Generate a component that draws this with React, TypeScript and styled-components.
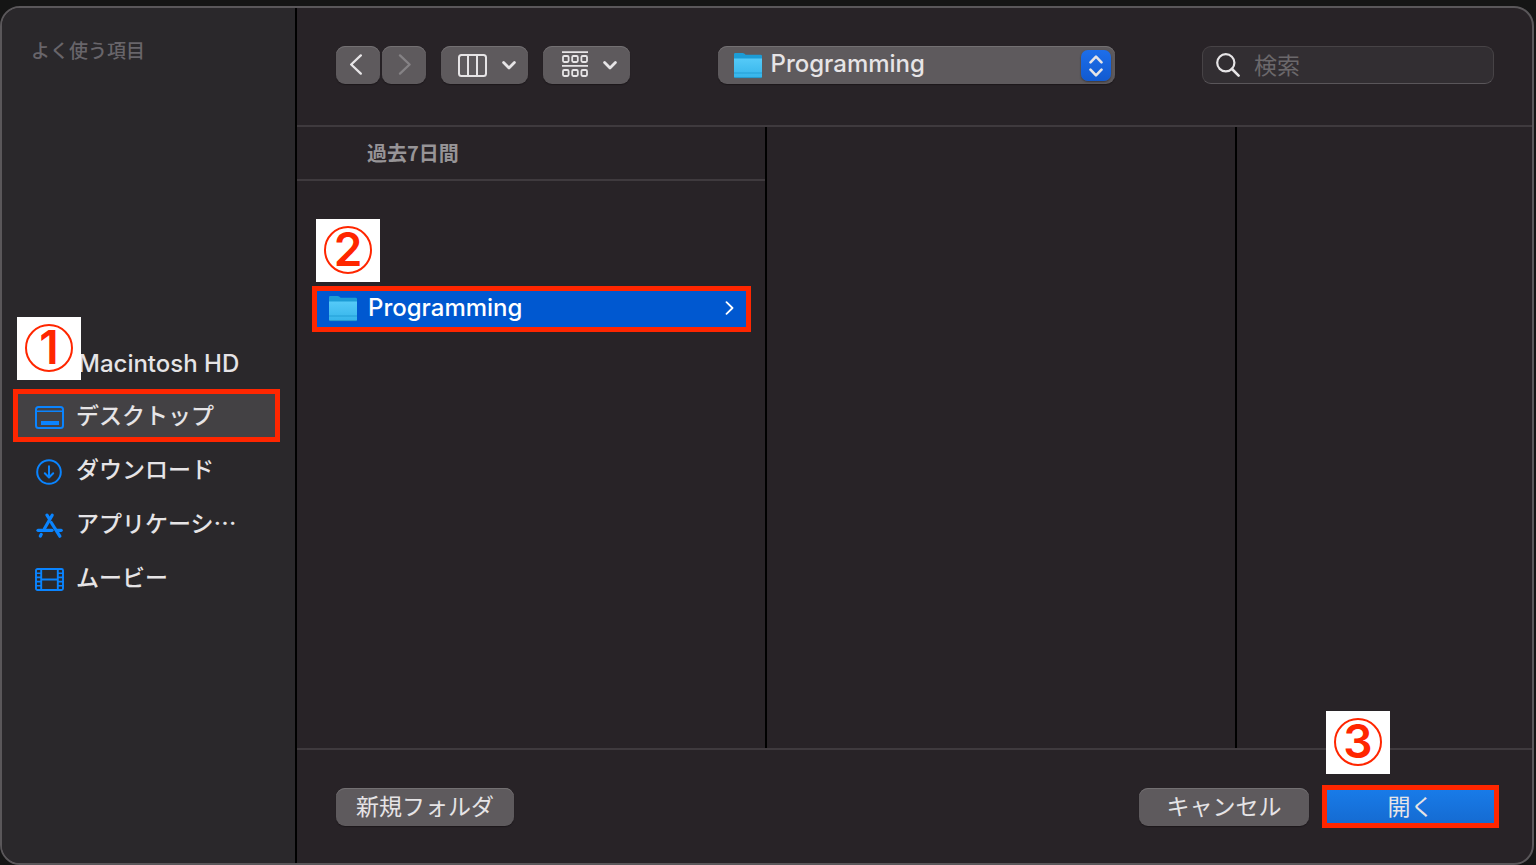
import React from 'react';
import styled, { createGlobalStyle, css } from 'styled-components';

const color = {
  desktop: '#151515',
  sidebar: '#2a282b',
  panel: '#282327',
  control: '#5e5a5d',
  edge: '#5a575a',
  rule: '#3f3a3e',
  text: '#e6e4e6',
  muted: '#68656a',
  accent: '#0a84ff',
  mark: '#ff2600',
};

const latin = `Inter, "Noto Sans CJK JP", sans-serif`;
const japanese = `"Noto Sans CJK JP", sans-serif`;

const GlobalStyle = createGlobalStyle`
  *, *::before, *::after { box-sizing: border-box; }
  body { margin: 0; background: ${color.desktop}; font-family: ${japanese}; color: ${color.text}; }
  button, input, select { font: inherit; color: inherit; margin: 0; }
  svg { display: block; flex: none; }
`;

const Screen = styled.div`
  display: flex;
  min-height: 100vh;
  padding: 6px 2px 0 0;
`;

const Dialog = styled.main`
  flex: 1;
  min-width: 0;
  display: flex;
  border: 2px solid ${color.edge};
  border-radius: 20px;
  background: ${color.panel};
  overflow: hidden;
`;

const Sidebar = styled.aside`
  flex: none;
  width: 295px;
  padding: 28px 15px 0 11px;
  background: ${color.sidebar};
  border-right: 2px solid #000;
`;

const SidebarTitle = styled.h2`
  margin: 0 0 271px;
  padding-left: 18px;
  font-size: 19px;
  line-height: 28px;
  font-weight: 500;
  color: ${color.muted};
`;

const Places = styled.nav`
  display: flex;
  flex-direction: column;
  gap: 1px;
`;

const Place = styled.a<{ $current?: boolean }>`
  position: relative;
  display: flex;
  align-items: center;
  gap: 12px;
  height: 53px;
  padding: 4px 0 0 16px;
  border: 5px solid transparent;
  white-space: nowrap;
  text-decoration: none;
  color: ${color.text};
  ${(p) =>
    p.$current &&
    css`
      background: #434144;
      border-color: ${color.mark};
    `}
`;

const PlaceName = styled.span<{ $latin?: boolean }>`
  padding-bottom: ${(p) => (p.$latin ? 0 : 7)}px;
  padding-left: ${(p) => (p.$latin ? 2 : 0)}px;
  font-family: ${(p) => (p.$latin ? latin : japanese)};
  font-size: ${(p) => (p.$latin ? 24 : 23)}px;
  line-height: 32px;
  font-weight: 500;
`;

const IconSlot = styled.span`
  flex: none;
  width: 30px;
  display: flex;
  justify-content: center;
  color: ${color.accent};
`;

const StepBox = styled.span<{ $gap: number }>`
  position: absolute;
  left: -1px;
  bottom: calc(100% + ${(p) => p.$gap}px);
  z-index: 1;
  display: grid;
  justify-content: center;
  align-content: start;
  width: 64px;
  height: 63px;
  padding-top: 7px;
  background: #fff;
`;

const StepCircle = styled.span`
  width: 48px;
  height: 48px;
  border: 2px solid ${color.mark};
  border-radius: 50%;
  font-family: Inter, sans-serif;
  font-size: 46px;
  line-height: 43px;
  font-weight: 600;
  text-align: center;
  color: ${color.mark};
`;

const Step = ({ n, gap }: { n: number; gap: number }) => (
  <StepBox $gap={gap}>
    <StepCircle>{n}</StepCircle>
  </StepBox>
);

const Content = styled.section`
  flex: 1;
  min-width: 0;
  display: flex;
  flex-direction: column;
`;

const Toolbar = styled.header`
  display: flex;
  justify-content: space-between;
  padding: 38px 38px 41px 39px;
  border-bottom: 2px solid ${color.rule};
`;

const Tools = styled.div`
  display: flex;
  gap: 15px;
`;

const Pair = styled.div`
  display: flex;
  gap: 2px;
`;

const raised = css`
  height: 38px;
  border: 0;
  border-radius: 9px;
  background: ${color.control};
  box-shadow: inset 0 1px 0 #737072, 0 1px 1px #1c181b;
`;

const ToolButton = styled.button<{ $menu?: boolean }>`
  ${raised}
  display: flex;
  align-items: center;
  justify-content: center;
  gap: 15px;
  width: ${(p) => (p.$menu ? 87 : 44)}px;
  padding: 0 0 0 ${(p) => (p.$menu ? 5 : 0)}px;
  &:disabled { color: #858285; }
`;

const Folder = styled.label`
  position: relative;
  display: block;
  flex: 0 1 397px;
`;

const FolderSelect = styled.select`
  ${raised}
  appearance: none;
  width: 100%;
  padding: 0 48px 2px 53px;
  font-family: ${latin};
  font-size: 24px;
  font-weight: 500;
  line-height: 36px;
`;

const FolderMark = styled.span`
  position: absolute;
  left: 16px;
  top: 6px;
  pointer-events: none;
`;

const Stepper = styled.span`
  position: absolute;
  right: 4px;
  top: 4px;
  display: grid;
  place-items: center;
  width: 30px;
  height: 31px;
  border-radius: 7px;
  background: linear-gradient(#1d6eea, #125ad0);
  box-shadow: 0 1px 2px #3a373a;
  pointer-events: none;
`;

const Search = styled.label`
  display: flex;
  align-items: center;
  gap: 14px;
  flex: 0 1 292px;
  min-width: 0;
  height: 38px;
  padding: 0 12px 0 13px;
  border: 1px solid #474346;
  border-bottom-color: #5a565a;
  border-radius: 9px;
  background: #322e32;
`;

const SearchInput = styled.input`
  flex: 1;
  min-width: 0;
  padding: 0 0 2px;
  border: 0;
  outline: 0;
  background: none;
  font-size: 23px;
  line-height: 32px;
  &::placeholder { color: #6b686b; opacity: 1; }
`;

const Columns = styled.div`
  flex: 1;
  display: flex;
`;

const Column = styled.div<{ $last?: boolean }>`
  flex: ${(p) => (p.$last ? '1 1 0' : '0 1 470px')};
  min-width: 0;
  border-right: ${(p) => (p.$last ? '0' : '2px solid #000')};
`;

const GroupTitle = styled.h3`
  margin: 0 0 105px;
  padding: 12px 0 12px 70px;
  border-bottom: 2px solid ${color.rule};
  font-family: ${japanese};
  font-size: 20px;
  line-height: 28px;
  font-weight: 700;
  color: #979497;
`;

const FileRow = styled.button`
  position: relative;
  display: flex;
  align-items: center;
  gap: 11px;
  width: calc(100% - 29px);
  height: 46px;
  margin: 0 14px 0 15px;
  padding: 0 12px 2px;
  border: 5px solid ${color.mark};
  background: #0058d0;
  font-family: ${latin};
  font-size: 24px;
  font-weight: 500;
  line-height: 34px;
  color: #fff;
`;

const FileName = styled.span`
  flex: 1;
  text-align: left;
`;

const Footer = styled.footer`
  display: flex;
  align-items: center;
  gap: 13px;
  padding: 35px 33px 35px 39px;
  border-top: 2px solid ${color.rule};
`;

const PushButton = styled.button<{ $width: number }>`
  ${raised}
  width: ${(p) => p.$width}px;
  padding: 0 0 4px;
  font-size: 23px;
  line-height: 32px;
`;

const Spacer = styled.span`
  flex: 1;
`;

const OpenButton = styled.button`
  position: relative;
  width: 177px;
  height: 43px;
  padding: 0 0 4px;
  border: 5px solid ${color.mark};
  background: linear-gradient(#187be8, #156bd2);
  font-size: 23px;
  line-height: 28px;
`;

const line = {
  fill: 'none',
  stroke: 'currentColor',
  strokeLinecap: 'round',
  strokeLinejoin: 'round',
} as const;

const FolderIcon = ({ id }: { id: string }) => (
  <svg width="28" height="27" viewBox="0 0 28 27" aria-hidden="true">
    <defs>
      <linearGradient id={id} x1="0" y1="0" x2="0" y2="1">
        <stop offset="0" stopColor="#55caf8" />
        <stop offset="1" stopColor="#35b4ea" />
      </linearGradient>
    </defs>
    <path d="M0 2.2Q0 1 1.2 1H8.6Q9.5 1 10.2 1.6L11.6 2.7H26.6Q28 2.7 28 4V8H0Z" fill="#1c9cd6" />
    <path d="M0 6.4H28V24.6Q28 26 26.6 26H1.4Q0 26 0 24.6Z" fill={`url(#${id})`} />
    <path d="M0 21H28" stroke="#229fd6" strokeWidth="1" />
    <path d="M.5 25.6H27.5" stroke="#2599cc" strokeWidth="1" />
  </svg>
);

const DesktopIcon = () => (
  <svg width="29" height="23" viewBox="0 0 29 23" {...line} strokeWidth="2" aria-hidden="true">
    <rect x="1" y="1" width="27" height="21" rx="2.5" />
    <path d="M1 5.3H28" strokeWidth="1.6" />
    <rect x="6" y="15" width="18" height="4" fill="currentColor" stroke="none" />
  </svg>
);

const DownloadIcon = () => (
  <svg width="26" height="26" viewBox="0 0 26 26" {...line} strokeWidth="2" aria-hidden="true">
    <circle cx="13" cy="13" r="11.8" />
    <path d="M13 7.3V18.2M8.8 14.3L13 18.5L17.2 14.3" />
  </svg>
);

const AppsIcon = () => (
  <svg width="27" height="25" viewBox="0 0 27 25" {...line} strokeWidth="3.2" aria-hidden="true">
    <path d="M11 2.2L13.2 5.6" />
    <path d="M16.2 2.2L8.4 15.8" />
    <path d="M2 17.3H16" />
    <path d="M15.2 9.5L23.8 23.2" />
    <path d="M21 17.3H25.2" />
    <path d="M5.2 21.4L4.4 23" />
  </svg>
);

const FilmIcon = () => (
  <svg width="29" height="23" viewBox="0 0 29 23" {...line} strokeWidth="1.9" aria-hidden="true">
    <rect x="1" y="1" width="27" height="21" rx="1.5" />
    <path d="M6.2 1V22M22.8 1V22M6.2 11.5H22.8" />
    <path d="M1 5.2H6M1 9.4H6M1 13.6H6M1 17.8H6M23 5.2H28M23 9.4H28M23 13.6H28M23 17.8H28" strokeWidth="1.6" />
  </svg>
);

const ColumnsIcon = () => (
  <svg width="29" height="23" viewBox="0 0 29 23" {...line} strokeWidth="2" aria-hidden="true">
    <rect x="1" y="1" width="27" height="21" rx="2.5" />
    <path d="M10 1V22M19 1V22" />
  </svg>
);

const GroupIcon = () => (
  <svg width="26" height="28" viewBox="0 0 26 28" {...line} strokeLinecap="butt" strokeWidth="1.8" aria-hidden="true">
    <path d="M0 1.2H26M0 14.8H26" />
    {[5, 19].map((y) =>
      [1, 10.2, 19.4].map((x) => <rect key={`${x}-${y}`} x={x} y={y} width="5.6" height="6" rx="1.2" />),
    )}
  </svg>
);

const DownChevron = () => (
  <svg width="14" height="9" viewBox="0 0 14 9" {...line} strokeWidth="2.8" aria-hidden="true">
    <path d="M1.6 1.6L7 7L12.4 1.6" />
  </svg>
);

const SideChevron = ({ forward }: { forward?: boolean }) => (
  <svg width="16" height="22" viewBox="0 0 16 22" {...line} strokeWidth="2.3" aria-hidden="true">
    <path d={forward ? 'M4 1.4L13.6 10.5L4 19.6' : 'M10.8 1.4L1.2 10.5L10.8 19.6'} />
  </svg>
);

const App = () => (
  <>
    <GlobalStyle />
    <Screen lang="ja">
      <Dialog>
        <Sidebar>
          <SidebarTitle>よく使う項目</SidebarTitle>
          <Places>
            <Place href="#hd">
              <IconSlot />
              <PlaceName $latin>Macintosh HD</PlaceName>
            </Place>
            <Place href="#desktop" $current>
              <IconSlot><DesktopIcon /></IconSlot>
              <PlaceName>デスクトップ</PlaceName>
              <Step n={1} gap={14} />
            </Place>
            <Place href="#downloads">
              <IconSlot><DownloadIcon /></IconSlot>
              <PlaceName>ダウンロード</PlaceName>
            </Place>
            <Place href="#applications">
              <IconSlot><AppsIcon /></IconSlot>
              <PlaceName>アプリケーシ⋯</PlaceName>
            </Place>
            <Place href="#movies">
              <IconSlot><FilmIcon /></IconSlot>
              <PlaceName>ムービー</PlaceName>
            </Place>
          </Places>
        </Sidebar>

        <Content>
          <Toolbar>
            <Tools>
              <Pair>
                <ToolButton aria-label="戻る"><SideChevron /></ToolButton>
                <ToolButton aria-label="進む" disabled><SideChevron forward /></ToolButton>
              </Pair>
              <ToolButton $menu aria-label="表示">
                <ColumnsIcon />
                <DownChevron />
              </ToolButton>
              <ToolButton $menu aria-label="グループ">
                <GroupIcon />
                <DownChevron />
              </ToolButton>
            </Tools>
            <Folder>
              <FolderSelect aria-label="場所">
                <option>Programming</option>
              </FolderSelect>
              <FolderMark><FolderIcon id="folder-location" /></FolderMark>
              <Stepper>
                <svg width="14" height="22" viewBox="0 0 14 22" {...line} strokeWidth="2.6" aria-hidden="true">
                  <path d="M1.5 7.3L7 1.7L12.5 7.3M1.5 14.7L7 20.3L12.5 14.7" />
                </svg>
              </Stepper>
            </Folder>
            <Search>
              <svg width="24" height="24" viewBox="0 0 24 24" {...line} strokeWidth="2.2" aria-hidden="true">
                <circle cx="9.8" cy="9.8" r="8.6" />
                <path d="M16 16L22.6 22.6" strokeWidth="2.6" />
              </svg>
              <SearchInput type="search" placeholder="検索" aria-label="検索" />
            </Search>
          </Toolbar>

          <Columns>
            <Column>
              <GroupTitle>過去7日間</GroupTitle>
              <FileRow>
                <FolderIcon id="folder-row" />
                <FileName>Programming</FileName>
                <svg width="9" height="14" viewBox="0 0 9 14" {...line} strokeWidth="1.8" aria-hidden="true">
                  <path d="M1.5 1.2L7.5 7L1.5 12.8" />
                </svg>
                <Step n={2} gap={9} />
              </FileRow>
            </Column>
            <Column />
            <Column $last />
          </Columns>

          <Footer>
            <PushButton $width={178}>新規フォルダ</PushButton>
            <Spacer />
            <PushButton $width={170}>キャンセル</PushButton>
            <OpenButton>
              開く
              <Step n={3} gap={16} />
            </OpenButton>
          </Footer>
        </Content>
      </Dialog>
    </Screen>
  </>
);

export default App;
